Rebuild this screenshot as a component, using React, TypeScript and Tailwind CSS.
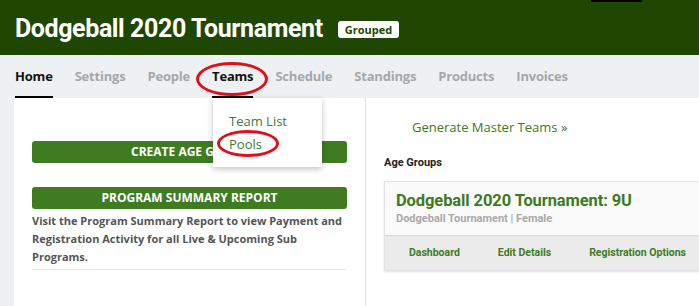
import React from 'react';

const navItems = ['Home', 'Settings', 'People', 'Teams', 'Schedule', 'Standings', 'Products', 'Invoices'];

const App: React.FC = () => {
  return (
    <div className="w-[699px] h-[306px] overflow-hidden bg-[#eef1f4] font-['Open_Sans',sans-serif] relative">
      {/* header */}
      <div className="h-[55px] bg-[#1f4702] flex items-center pl-[15px] relative">
        <div className="absolute top-0 left-[591px] w-[51px] h-[2px] bg-black" />
        <h1 className="text-white font-bold text-[25px] tracking-[-0.4px] font-['Roboto',sans-serif] leading-none mt-[2px]">Dodgeball 2020 Tournament</h1>
        <span className="ml-[15px] mt-[3px] bg-white text-[#1f4702] text-[11px] font-bold rounded-[3px] px-[7px] py-[1px] leading-[15px]">Grouped</span>
      </div>

      {/* nav */}
      <div className="h-[43px] flex items-stretch pl-[15px] gap-[22px]">
        {navItems.map((n) => {
          const active = n === 'Home' || n === 'Teams';
          return (
            <div key={n} className="relative flex items-center">
              <span className={`text-[13px] tracking-[-0.2px] font-bold ${active ? 'text-[#111]' : 'text-[#a5a7aa]'}`}>{n}</span>
              {active && <div className="absolute bottom-0 left-0 right-0 h-[2px] bg-black" />}
              {n === 'Teams' && (
                <div className="absolute left-[-16px] top-[7px] w-[72px] h-[34px] rounded-[50%] border-[3px] border-[#e0101a]" />
              )}
            </div>
          );
        })}
      </div>

      {/* body */}
      <div className="flex pl-[14px]">
        <div className="w-[352px] shrink-0 h-[208px] bg-white border-r border-[#dde0e3] px-[18px] pt-[43px]">
          <div className="h-[22px] rounded-[3px] bg-[#3f7c21] text-white text-[12px] font-bold flex items-center justify-center">CREATE AGE GROUP</div>
          <div className="mt-[24px] h-[22px] rounded-[3px] bg-[#3f7c21] text-white text-[12px] font-bold flex items-center justify-center">PROGRAM SUMMARY REPORT</div>
          <p className="mt-[3px] text-[11px] font-bold text-[#555] leading-[18px] pb-[3px] border-b border-[#e5e5e5]">
            Visit the Program Summary Report to view Payment and Registration Activity for all Live &amp; Upcoming Sub Programs.
          </p>
        </div>
        <div className="flex-1 min-w-0 h-[208px] bg-white pl-[18px] pt-[17px]">
          <div className="pl-[28px] text-[13px] text-[#3c7a24] h-[25px] flex items-center">Generate Master Teams »</div>
          <div className="mt-[15px] text-[11px] font-bold text-[#222] font-['Roboto',sans-serif]">Age Groups</div>
          <div className="mt-[9px] border border-[#e2e2e2] shadow-[0_1px_2px_rgba(0,0,0,0.12)] w-[330px]">
            <div className="bg-[#fafafa] px-[11px] pt-[8px] pb-[9px] border-b border-[#d9d9d9]">
              <div className="text-[16.5px] tracking-[-0.1px] font-bold text-[#3d7b1e] font-['Roboto',sans-serif] leading-[22px]">Dodgeball 2020 Tournament: 9U</div>
              <div className="text-[11px] font-bold text-[#a9a9a9] font-['Roboto',sans-serif] leading-[14px]">Dodgeball Tournament | Female</div>
            </div>
            <div className="bg-[#ebebeb] h-[34px] flex items-center pl-[24px] gap-[38px] text-[10.5px] font-bold text-[#3d7b1e] font-['Roboto',sans-serif] whitespace-nowrap">
              <span>Dashboard</span>
              <span>Edit Details</span>
              <span>Registration Options</span>
            </div>
          </div>
        </div>
      </div>

      {/* dropdown */}
      <div className="absolute left-[213px] top-[98px] w-[109px] h-[69px] bg-white shadow-[0_2px_6px_rgba(0,0,0,0.25)] pl-[16px] pt-[13px]">
        <div className="text-[13px] text-[#3e7a3a] leading-[20px]">Team List</div>
        <div className="text-[13px] text-[#3e7a3a] leading-[20px] mt-[3px] relative">
          Pools
          <div className="absolute left-[-12px] top-[-4px] w-[62px] h-[27px] rounded-[50%] border-[3px] border-[#e0101a]" />
        </div>
      </div>
    </div>
  );
};

export default App;
